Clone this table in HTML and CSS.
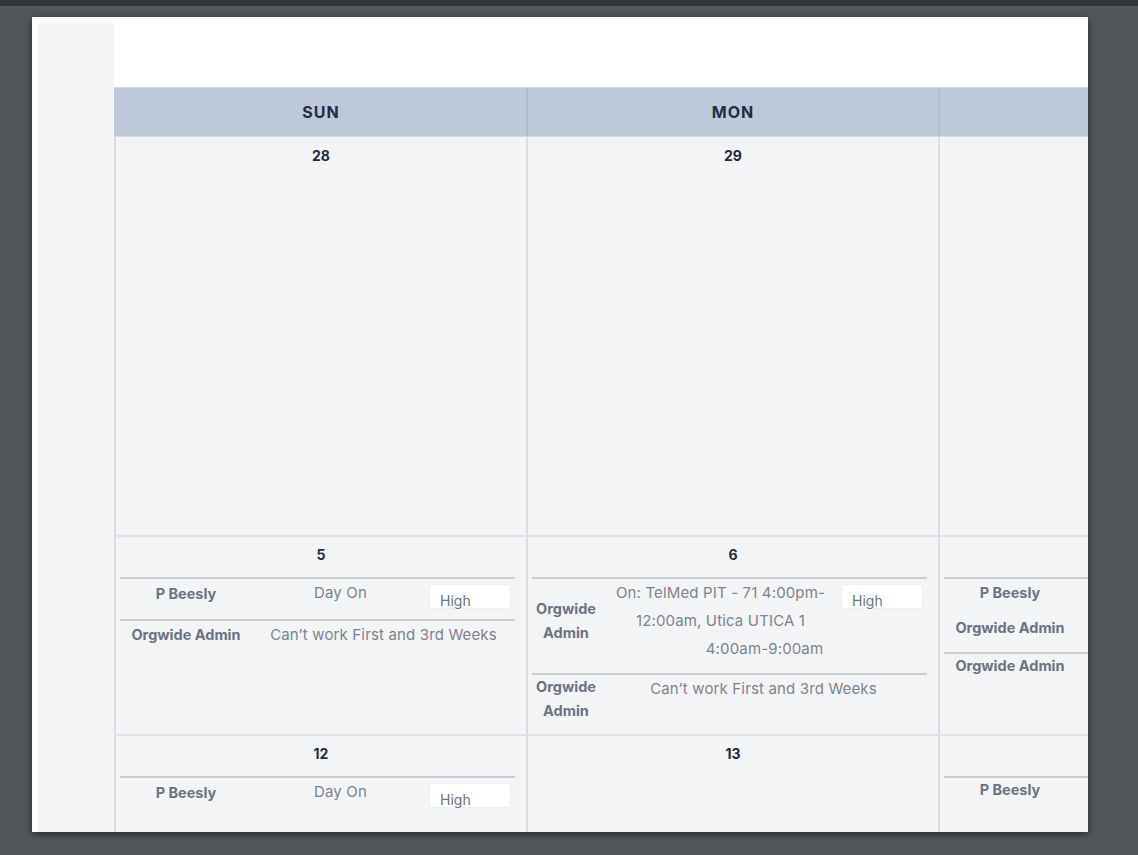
FILE: index.html
```html
<!DOCTYPE html>
<html lang="en">
<head>
<meta charset="utf-8">
<title>Calendar</title>
<link rel="stylesheet" href="styles.css">
</head>
<body>
<div class="topbar"></div>
<div class="stage">
  <div class="card">
    <aside class="sidebar"></aside>
    <main class="main">
      <div class="toolbar"></div>
      <div class="calendar">
        <div class="weekdays">
          <div class="wd">SUN</div>
          <div class="wd">MON</div>
          <div class="wd">TUE</div>
          <div class="wd">WED</div>
          <div class="wd">THU</div>
          <div class="wd">FRI</div>
          <div class="wd">SAT</div>
        </div>
        <div class="week week-tall">
          <div class="day"><div class="date">28</div></div>
          <div class="day"><div class="date">29</div></div>
          <div class="day"><div class="date">30</div></div>
          <div class="day"><div class="date">31</div></div>
          <div class="day"><div class="date">1</div></div>
          <div class="day"><div class="date">2</div></div>
          <div class="day"><div class="date">3</div></div>
        </div>
        <div class="week week-mid">
          <div class="day">
            <div class="date">5</div>
            <div class="entry">
              <div class="name">P Beesly</div>
              <div class="desc">Day On</div>
              <div class="prio"><span class="prio-box">High</span></div>
            </div>
            <div class="entry entry-wide">
              <div class="name">Orgwide Admin</div>
              <div class="desc">Can’t work First and 3rd Weeks</div>
            </div>
          </div>
          <div class="day">
            <div class="date">6</div>
            <div class="entry entry-narrow">
              <div class="name">Orgwide Admin</div>
              <div class="desc">On: TelMed PIT - 71 4:00pm-<br>12:00am, Utica UTICA 1<span class="tail">4:00am-9:00am</span></div>
              <div class="prio"><span class="prio-box">High</span></div>
            </div>
            <div class="entry entry-narrow entry-wide">
              <div class="name">Orgwide Admin</div>
              <div class="desc">Can’t work First and 3rd Weeks</div>
            </div>
          </div>
          <div class="day">
            <div class="date">7</div>
            <div class="entry entry-wide">
              <div class="name name-stack"><span>P Beesly</span><span>Orgwide Admin</span></div>
              <div class="desc"></div>
            </div>
            <div class="entry entry-wide">
              <div class="name">Orgwide Admin</div>
              <div class="desc"></div>
            </div>
          </div>
          <div class="day"><div class="date">8</div></div>
          <div class="day"><div class="date">9</div></div>
          <div class="day"><div class="date">10</div></div>
          <div class="day"><div class="date">11</div></div>
        </div>
        <div class="week week-low">
          <div class="day">
            <div class="date">12</div>
            <div class="entry">
              <div class="name">P Beesly</div>
              <div class="desc">Day On</div>
              <div class="prio"><span class="prio-box">High</span></div>
            </div>
          </div>
          <div class="day"><div class="date">13</div></div>
          <div class="day">
            <div class="date">14</div>
            <div class="entry entry-wide">
              <div class="name">P Beesly</div>
              <div class="desc"></div>
            </div>
          </div>
          <div class="day"><div class="date">15</div></div>
          <div class="day"><div class="date">16</div></div>
          <div class="day"><div class="date">17</div></div>
          <div class="day"><div class="date">18</div></div>
        </div>
      </div>
    </main>
  </div>
</div>
</body>
</html>
```

FILE: styles.css
```css
* { box-sizing: border-box; }

html, body {
  margin: 0;
  padding: 0;
  height: 100%;
}

body {
  background: #53575b;
  font-family: Inter, "Liberation Sans", sans-serif;
  font-size: 14px;
  overflow: hidden;
}

.topbar {
  height: 6px;
  background: #33373b;
}

.stage {
  padding: 11px 50px 0 32px;
}

.card {
  display: flex;
  width: 1056px;
  height: 815px;
  padding: 6px 0 0 6px;
  background: #ffffff;
  box-shadow: 0 2px 8px rgba(0, 0, 0, 0.55);
  overflow: hidden;
}

.sidebar {
  flex: 0 0 76px;
  background: #f3f4f6;
}

.main {
  flex: 1;
  min-width: 0;
  overflow: hidden;
  display: flex;
  flex-direction: column;
}

.toolbar {
  flex: 0 0 64px;
  background: #ffffff;
}

.calendar {
  width: 2884px;
  flex: 1;
  background: #f3f4f6;
}

.weekdays {
  display: grid;
  grid-template-columns: repeat(7, 412px);
  height: 50px;
  background: #bdc9d8;
  border-top: 1px solid #d3d9e1;
  border-bottom: 1px solid #d6dbe2;
}

.wd {
  display: flex;
  align-items: center;
  justify-content: center;
  font-weight: 700;
  font-size: 16px;
  letter-spacing: 1px;
  color: #1f2e45;
  border-left: 2px solid #b1bccd;
}

.wd:first-child { border-left-color: #bdc9d8; }

.week {
  display: grid;
  grid-template-columns: repeat(7, 412px);
}

.week-tall { height: 400px; }
.week-mid { height: 199px; }
.week-low { height: 200px; }

.day {
  border-left: 2px solid #dcdde0;
  border-bottom: 2px solid #e2e3e6;
  padding: 0 11px 0 4px;
  background: #f3f4f6;
}

.date {
  height: 40px;
  margin: 0 -11px 0 -4px;
  padding-top: 8px;
  line-height: 20px;
  text-align: center;
  font-weight: 700;
  font-size: 14px;
  color: #1f2d44;
}

.week-tall .date { padding-top: 9px; }

.entry {
  display: grid;
  grid-template-columns: 132px 1fr 86px;
  border-top: 2px solid #cbcdd0;
  padding-bottom: 10px;
}

.entry-wide { grid-template-columns: 132px 1fr; }
.entry-narrow { grid-template-columns: 68px 1fr 86px; }
.entry-narrow.entry-wide { grid-template-columns: 68px 1fr; }

.name {
  align-self: center;
  text-align: center;
  font-weight: 700;
  font-size: 14.5px;
  line-height: 24px;
  color: #6b7383;
}

.name-stack {
  display: flex;
  flex-direction: column;
  gap: 7px;
  align-self: start;
}

.name-stack span { line-height: 28px; }

.desc {
  text-align: center;
  font-size: 15px;
  letter-spacing: 0.15px;
  line-height: 28px;
  color: #7d838e;
}

.tail {
  display: block;
  padding-left: 88px;
}

.prio {
  display: flex;
  justify-content: flex-end;
  padding-right: 4px;
  align-self: start;
}

.prio-box {
  display: block;
  width: 82px;
  height: 25px;
  margin-top: 5px;
  padding: 8px 10px 0;
  background: #ffffff;
  border: 1px solid #eceef1;
  border-radius: 3px;
  font-size: 14px;
  line-height: 16px;
  color: #6b7383;
}
```
